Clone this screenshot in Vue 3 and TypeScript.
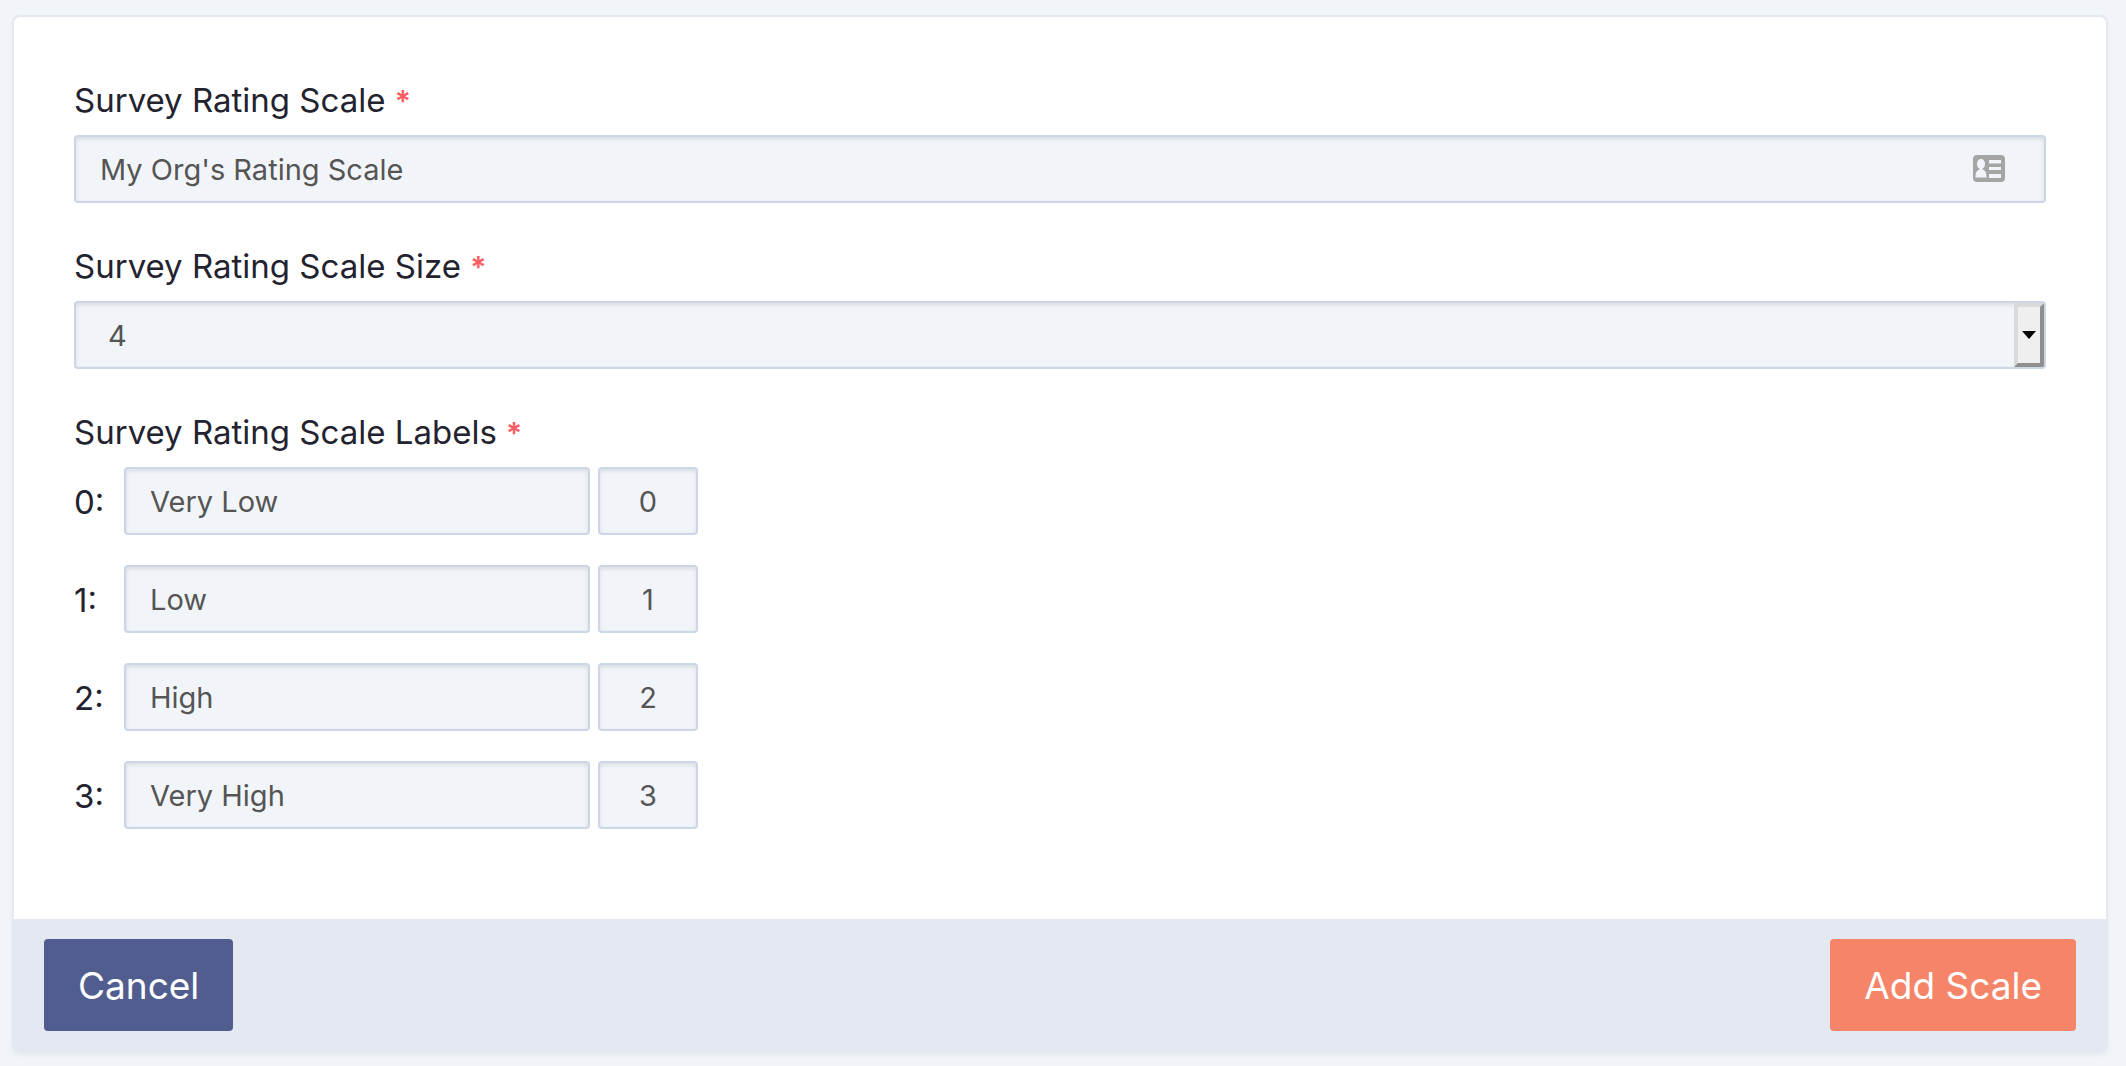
<script setup lang="ts">
import { ref } from 'vue'

interface ScaleLabel {
  text: string
  value: string
}

const scaleName = ref<string>("My Org's Rating Scale")
const scaleSize = ref<number>(4)
const sizes: number[] = [2, 3, 4, 5, 6, 7, 8, 9, 10]
const labels = ref<ScaleLabel[]>([
  { text: 'Very Low', value: '0' },
  { text: 'Low', value: '1' },
  { text: 'High', value: '2' },
  { text: 'Very High', value: '3' },
])
</script>

<template>
  <form class="card" @submit.prevent>
    <div class="card-body">
      <div class="group">
        <label class="title" for="scale-name">Survey Rating Scale <span class="required">*</span></label>
        <div class="control">
          <input id="scale-name" v-model="scaleName" class="field" type="text" />
          <svg class="contact-icon" viewBox="0 0 32 27" aria-hidden="true">
            <rect width="32" height="27" rx="4" fill="#a5a5a5" />
            <g fill="#f1f5fa">
              <ellipse cx="8" cy="9" rx="4" ry="5" />
              <path d="M6.5 12h3v2.500c3 .8 4 3.500 4 8h-11c0-4.500 1-7.200 4-8z" />
              <rect x="16" y="5" width="12" height="3" />
              <rect x="16" y="12" width="12" height="3" />
              <rect x="16" y="19" width="12" height="4" />
            </g>
            <rect x="16" y="8" width="12" height="1" fill="#c8cacd" />
          </svg>
        </div>
      </div>

      <div class="group">
        <label class="title" for="scale-size">Survey Rating Scale Size <span class="required">*</span></label>
        <div class="control">
          <select id="scale-size" v-model="scaleSize" class="field size">
            <option v-for="n in sizes" :key="n" :value="n">{{ n }}</option>
          </select>
          <span class="drop" aria-hidden="true">
            <svg viewBox="0 0 14 8"><path d="M0 0h14L7 8z" /></svg>
          </span>
        </div>
      </div>

      <fieldset class="group">
        <legend class="title">Survey Rating Scale Labels <span class="required">*</span></legend>
        <div class="rows">
          <div v-for="(item, i) in labels" :key="i" class="row">
            <label class="index" :for="`label-${i}`">{{ i }}:</label>
            <input :id="`label-${i}`" v-model="item.text" class="field name" type="text" />
            <input v-model="item.value" class="field value" type="text" :aria-label="`Value ${i}`" />
          </div>
        </div>
      </fieldset>
    </div>

    <div class="card-footer">
      <button class="btn cancel" type="button">Cancel</button>
      <button class="btn add" type="submit">Add Scale</button>
    </div>
  </form>
</template>

<style>
body {
  background: #f1f5fa;
}
</style>

<style scoped>
.card,
.card * {
  box-sizing: border-box;
}

.card {
  margin: 15px 18px 12px 12px;
  border: 2px solid #e4e8f1;
  border-radius: 8px;
  background: #fff;
  box-shadow: 0 2px 4px rgba(0, 0, 0, 0.05);
  color: #23232f;
  font-family: Inter, "Open Sans", sans-serif;
  font-size: 33px;
  line-height: 46px;
}

.card-body {
  display: flex;
  flex-direction: column;
  gap: 40px;
  padding: 60px 60px 90px;
}

.group {
  min-width: 0;
  margin: 0;
  padding: 0;
  border: 0;
}

.title {
  display: block;
  margin-bottom: 12px;
  padding: 0;
}

.required {
  color: #fd5c63;
  font-size: 30px;
  font-weight: 600;
  line-height: 1;
}

.control {
  position: relative;
}

.field {
  display: block;
  width: 100%;
  height: 68px;
  margin: 0;
  padding: 0 24px;
  border: 2px solid #cdd6e7;
  border-radius: 4px;
  background: #f1f5fa;
  box-shadow: inset 0 2px 4px rgba(0, 0, 0, 0.1);
  color: #555;
  font-family: inherit;
  font-size: 29px;
  outline: 0;
}

.size {
  appearance: none;
  padding-left: 32px;
}

.contact-icon {
  position: absolute;
  top: 20px;
  right: 41px;
  width: 32px;
  height: 27px;
}

.drop {
  position: absolute;
  top: 2px;
  right: 2px;
  bottom: 2px;
  display: flex;
  align-items: center;
  justify-content: center;
  width: 30px;
  border: 4px solid;
  border-color: #dadada #8f8f8f #8f8f8f #dadada;
  border-radius: 0 2px 2px 0;
  background: #efefef;
  pointer-events: none;
}

.drop svg {
  width: 14px;
  height: 8px;
}

.rows {
  display: flex;
  flex-direction: column;
  gap: 30px;
}

.row {
  display: flex;
  align-items: center;
}

.index {
  width: 50px;
  padding-top: 2px;
}

.name {
  width: 466px;
  margin-right: 8px;
}

.value {
  width: 100px;
  padding: 0;
  text-align: center;
}

.card-footer {
  display: flex;
  justify-content: space-between;
  padding: 20px 30px;
  border-radius: 0 0 6px 6px;
  background: #e4e8f1;
}

.btn {
  height: 92px;
  padding: 0 34px;
  border: 0;
  border-radius: 4px;
  color: #fff;
  font-family: inherit;
  font-size: 37px;
}

.cancel {
  background: #525d8f;
}

.add {
  background: #f58469;
}
</style>
